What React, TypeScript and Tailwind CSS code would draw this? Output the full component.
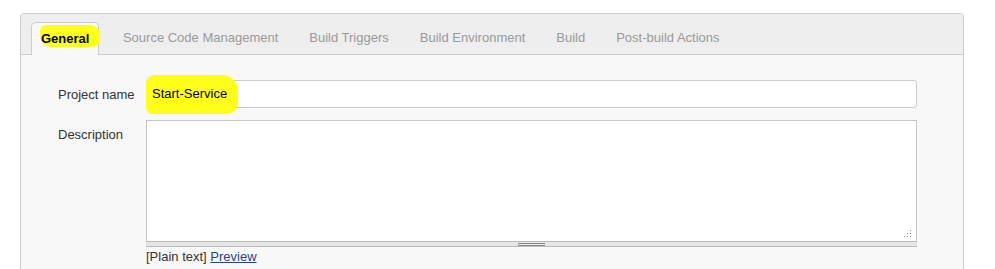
import React from "react"

const tabs = ["Source Code Management", "Build Triggers", "Build Environment", "Build", "Post-build Actions"]

export default function App() {
  return (
    <div className="w-[995px] h-[269px] bg-white overflow-hidden text-[13px] text-[#333]" style={{ fontFamily: '"Liberation Sans", Arial, sans-serif' }}>
      <div className="ml-[20px] mt-[13px] w-[944px] h-[260px] border border-b-0 border-[#ccc] rounded-t-[4px] bg-[#f8f8f8]">
        {/* tab bar */}
        <div className="h-[41px] bg-[#eeeeee] border-b border-[#ccc] rounded-t-[4px] flex items-end pl-[10px]">
          <div className="relative h-[33px] -mb-px px-[9px] flex items-center bg-[#f8f8f8] border border-b-0 border-[#ccc] rounded-t-[5px]">
            <span className="absolute left-[8px] top-[2px] w-[60px] h-[22px] bg-[#ffff1a] rounded-[6px_10px_8px_12px]" />
            <span className="relative font-bold text-black">General</span>
          </div>
          <div className="flex items-center h-[32px] ml-[8px]">
            {tabs.map((t) => (
              <div key={t} className="px-[15.5px] text-[#999]">{t}</div>
            ))}
          </div>
        </div>

        {/* form */}
        <div className="pt-[25px] pl-[37px] pr-[46px]">
          <div className="flex items-center">
            <div className="w-[88px] pt-[1px]">Project name</div>
            <div className="relative flex-1 h-[28px] bg-white border border-[#ccc] rounded-[3px] flex items-center pl-[5px]">
              <span className="absolute -left-[1px] -top-[6px] w-[92px] h-[39px] bg-[#ffff1a] rounded-[8px_16px_12px_6px]" />
              <span className="relative text-black">Start-Service</span>
            </div>
          </div>

          <div className="flex mt-[12px]">
            <div className="w-[88px] pt-[5px]">Description</div>
            <div className="flex-1">
              <div className="relative h-[121px] bg-white border border-b-0 border-[#c6c6c6]">
                <svg className="absolute right-[4px] bottom-[3px]" width="8" height="8" viewBox="0 0 8 8">
                  <rect x="6" y="0" width="1" height="1" fill="#999" />
                  <rect x="6" y="3" width="1" height="1" fill="#999" />
                  <rect x="3" y="3" width="1" height="1" fill="#999" />
                  <rect x="6" y="6" width="1" height="1" fill="#999" />
                  <rect x="3" y="6" width="1" height="1" fill="#999" />
                  <rect x="0" y="6" width="1" height="1" fill="#999" />
                </svg>
              </div>
              <div className="relative h-[6px] bg-[#e6e6e6] border-t border-b border-[#bbb] flex justify-center">
                <div className="mt-[1px] w-[27px] h-[3px] border-t border-b border-[#888]" />
              </div>
              <div className="mt-[2px] leading-[16px]">
                [Plain text] <a className="text-[#204a87] underline" href="#">Preview</a>
              </div>
            </div>
          </div>
        </div>
      </div>
    </div>
  )
}
